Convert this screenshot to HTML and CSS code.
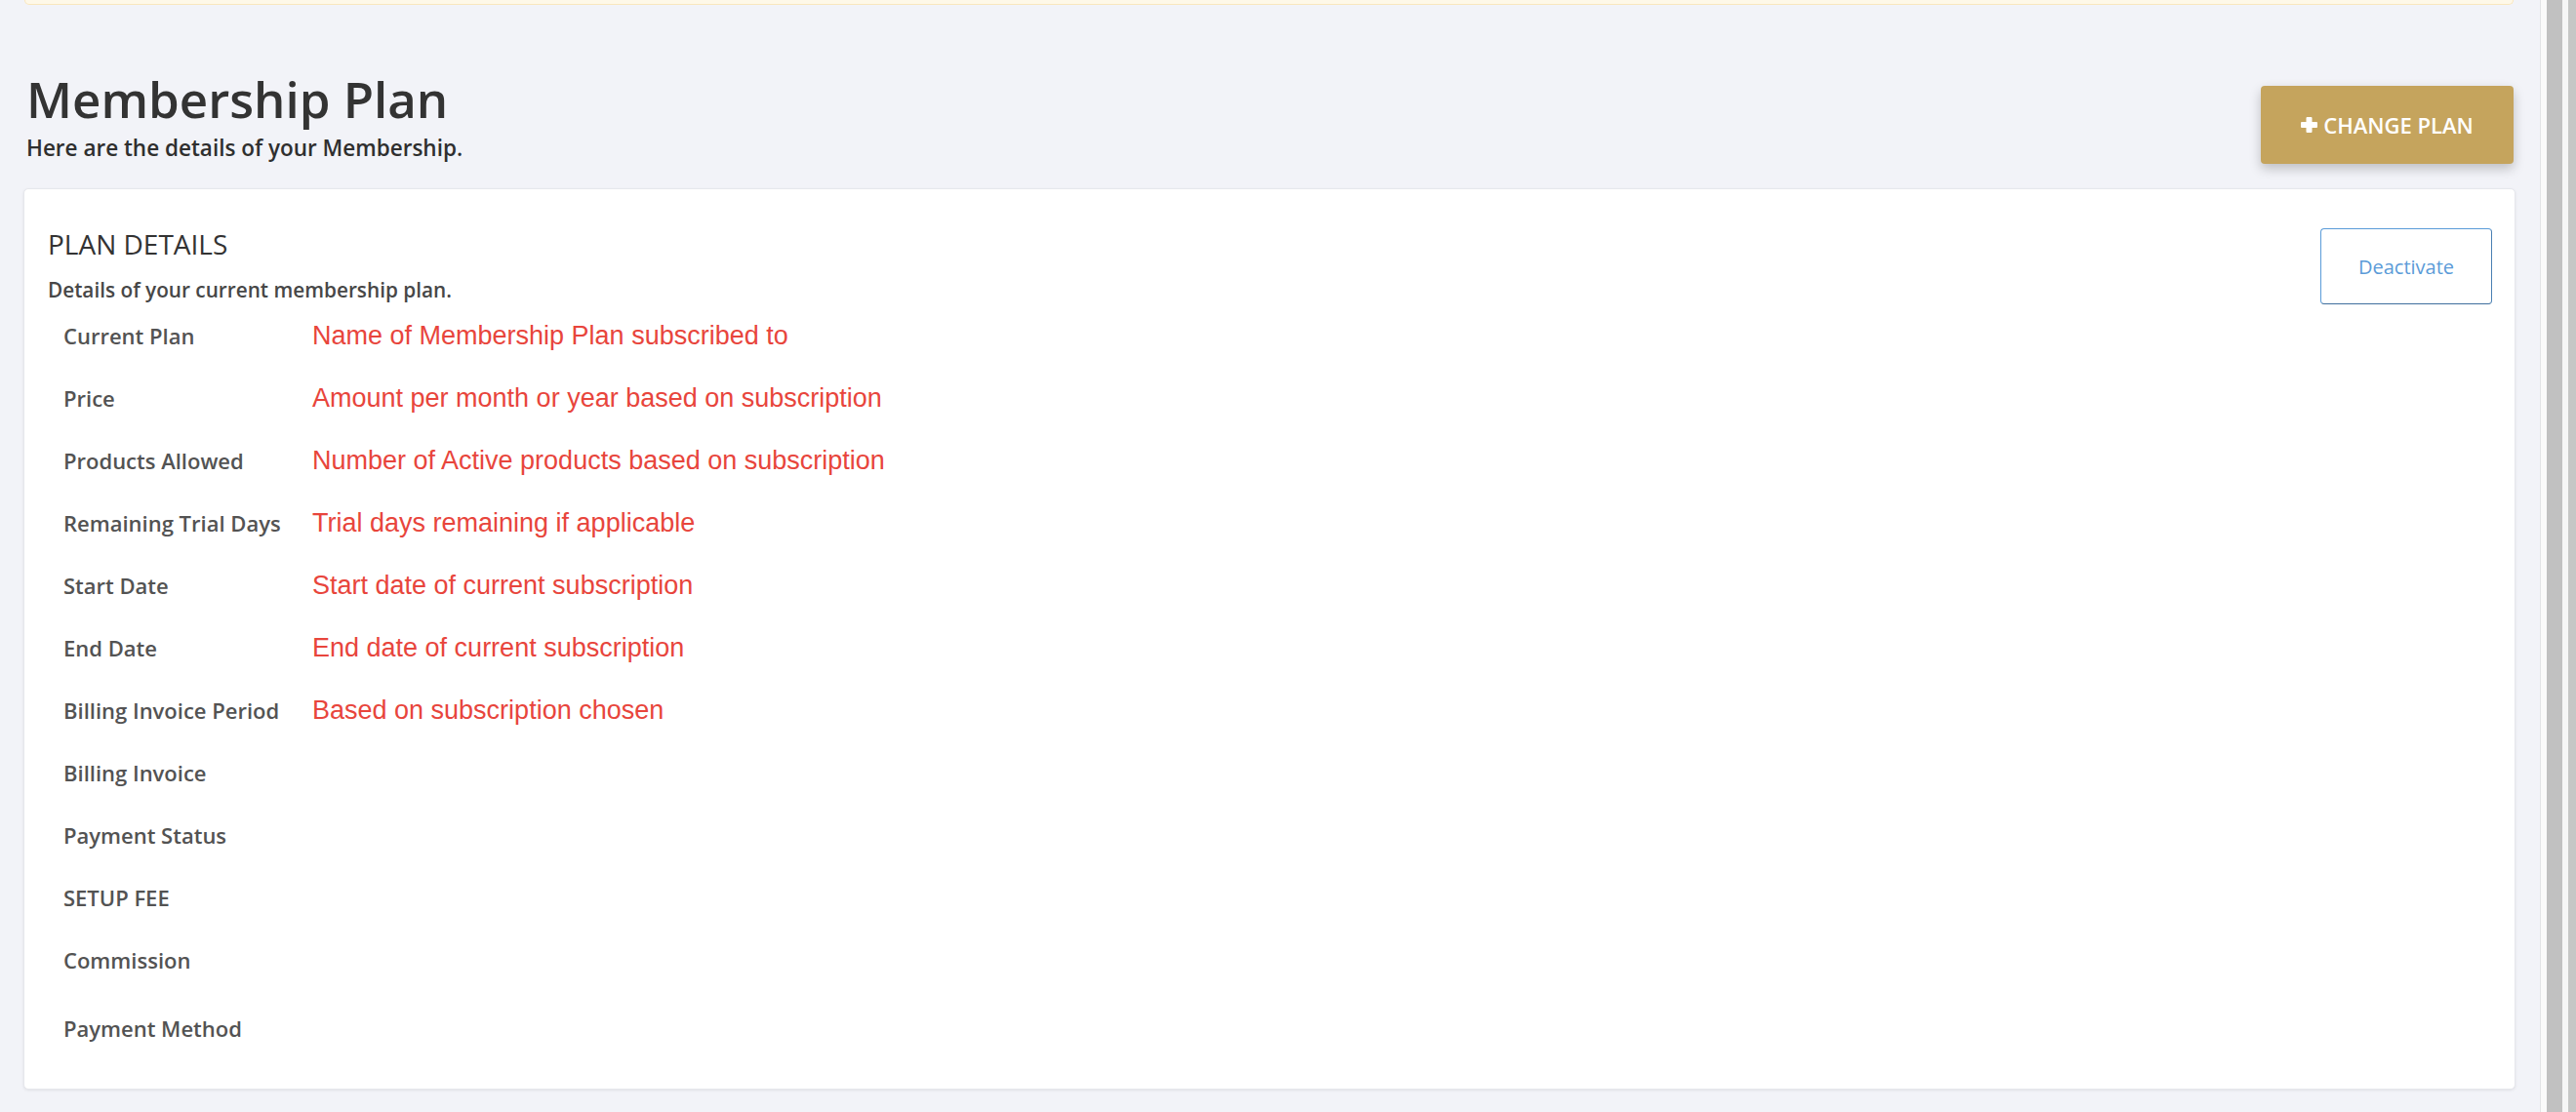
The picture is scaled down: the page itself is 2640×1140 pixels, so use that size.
FILE: index.html
```html
<!DOCTYPE html>
<html lang="en">
<head>
<meta charset="utf-8">
<title>Membership Plan</title>
<link rel="stylesheet" href="styles.css">
</head>
<body>
<div class="page">
  <main class="main">
    <div class="banner"></div>
    <header class="page-header">
      <div class="page-titles">
        <h1 class="page-title">Membership Plan</h1>
        <p class="page-subtitle">Here are the details of your Membership.</p>
      </div>
      <button class="btn-change" type="button">
        <svg class="plus-icon" viewBox="0 0 17 16" width="17" height="16" aria-hidden="true">
          <rect x="5.5" y="0" width="6" height="16" rx="1" fill="#fff"/>
          <rect x="0" y="5" width="17" height="6" rx="1" fill="#fff"/>
        </svg>
        <span>CHANGE PLAN</span>
      </button>
    </header>

    <section class="card">
      <div class="card-head">
        <div>
          <h2 class="card-title">PLAN DETAILS</h2>
          <p class="card-sub">Details of your current membership plan.</p>
        </div>
        <button class="btn-deactivate" type="button">Deactivate</button>
      </div>

      <div class="rows">
        <div class="row"><div class="label">Current Plan</div><div class="value">Name of Membership Plan subscribed to</div></div>
        <div class="row"><div class="label">Price</div><div class="value">Amount per month or year based on subscription</div></div>
        <div class="row"><div class="label">Products Allowed</div><div class="value">Number of Active products based on subscription</div></div>
        <div class="row"><div class="label">Remaining Trial Days</div><div class="value">Trial days remaining if applicable</div></div>
        <div class="row"><div class="label">Start Date</div><div class="value">Start date of current subscription</div></div>
        <div class="row"><div class="label">End Date</div><div class="value">End date of current subscription</div></div>
        <div class="row"><div class="label">Billing Invoice Period</div><div class="value">Based on subscription chosen</div></div>
        <div class="row"><div class="label">Billing Invoice</div><div class="value"></div></div>
        <div class="row"><div class="label">Payment Status</div><div class="value"></div></div>
        <div class="row"><div class="label">SETUP FEE</div><div class="value"></div></div>
        <div class="row"><div class="label">Commission</div><div class="value"></div></div>
        <div class="row row-last"><div class="label">Payment Method</div><div class="value"></div></div>
      </div>
    </section>
  </main>

  <div class="edge" aria-hidden="true">
    <div class="edge-line"></div>
    <div class="edge-gap"></div>
    <div class="edge-bar"></div>
    <div class="edge-gap2"></div>
    <div class="edge-bar2"></div>
  </div>
</div>
</body>
</html>
```

FILE: styles.css
```css
* { box-sizing: border-box; }

html, body {
  margin: 0;
  padding: 0;
  height: 1140px;
  overflow: hidden;
}

body {
  background: #f2f3f8;
  font-family: "Open Sans", "Noto Sans", sans-serif;
  color: #333;
}

.page {
  display: flex;
  height: 1140px;
}

.main {
  width: 2603px;
  flex: none;
  padding: 0 25px 0 24px;
}

.banner {
  height: 5px;
  margin: 0 2px 0 1px;
  background: #fef8e8;
  border: 1px solid #f9e7bd;
  border-top: none;
  border-radius: 0 0 6px 6px;
}

.page-header {
  display: flex;
  justify-content: space-between;
  align-items: flex-start;
  margin-top: 65px;
}

.page-titles { padding-left: 3px; }

.page-title {
  margin: 0;
  font-size: 51px;
  line-height: 62px;
  font-weight: 600;
  color: #333;
}

.page-subtitle {
  margin: 5px 0 0;
  font-size: 22.5px;
  line-height: 30px;
  font-weight: 600;
  color: #2f2f2f;
}

.btn-change {
  margin: 18px 2px 0 0;
  width: 259px;
  height: 80px;
  border: none;
  border-radius: 4px;
  background: #c5a45d;
  color: #fff;
  font-family: "Open Sans", "Noto Sans", sans-serif;
  font-size: 22px;
  font-weight: 600;
  display: flex;
  align-items: center;
  justify-content: center;
  gap: 6px;
  box-shadow: 0 5px 12px rgba(0, 0, 0, 0.22);
  padding: 0;
}

.plus-icon { display: block; margin-top: -1px; }

.card {
  margin-top: 25px;
  background: #fff;
  border: 1px solid #e6e7ec;
  border-radius: 5px;
  box-shadow: 0 1px 3px rgba(0, 0, 0, 0.08);
  padding: 39px 24px 29px 24px;
  height: 924px;
}

.card-head {
  display: flex;
  justify-content: space-between;
  align-items: flex-start;
}

.card-title {
  margin: 0;
  font-size: 28px;
  line-height: 34px;
  font-weight: 400;
  color: #333;
}

.card-sub {
  margin: 16px 0 0;
  font-size: 20.75px;
  line-height: 28px;
  font-weight: 600;
  color: #474747;
}

.btn-deactivate {
  margin: 1px -1px 0 0;
  width: 176px;
  height: 78px;
  background: #fff;
  border: 1.5px solid #5a9bd8;
  border-bottom-color: #3f6f9e;
  border-right-color: #4a7fb3;
  border-radius: 4px;
  color: #5b9bd8;
  font-family: "Open Sans", "Noto Sans", sans-serif;
  font-size: 20px;
  font-weight: 400;
  padding: 0;
}

.rows {
  padding-left: 16px;
}

.row {
  display: grid;
  grid-template-columns: 255px 1fr;
  align-items: baseline;
  height: 64px;
}

.row-last { margin-top: 6px; }

.label {
  font-size: 22px;
  line-height: 64px;
  font-weight: 600;
  color: #535353;
  white-space: nowrap;
}

.value {
  font-family: "Liberation Sans", Arial, sans-serif;
  font-size: 27px;
  line-height: 64px;
  color: #e8453c;
  white-space: nowrap;
}

.edge {
  flex: none;
  width: 37px;
  display: flex;
  height: 1140px;
}

.edge-line { width: 1px; background: #e2e3e6; }
.edge-gap { width: 6px; background: #fafafa; }
.edge-bar { width: 16px; background: #c1c1c1; }
.edge-gap2 { width: 6px; background: #f6f6f6; }
.edge-bar2 { width: 8px; background: #c6c7c6; }
```
